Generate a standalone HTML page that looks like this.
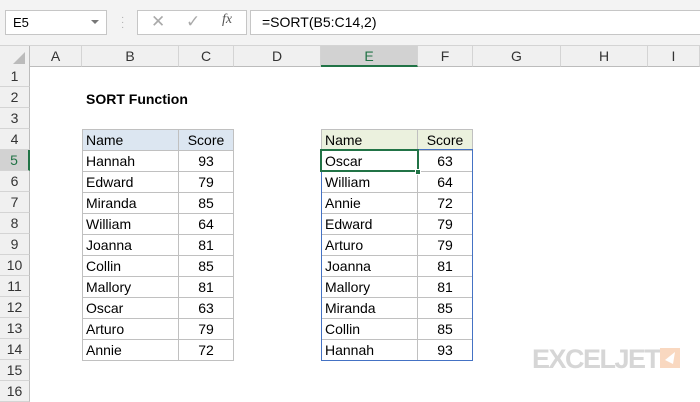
<!DOCTYPE html>
<html><head><style>
*{margin:0;padding:0;box-sizing:border-box}
body{width:700px;height:400px;overflow:hidden;background:#fff;font-family:"Liberation Sans",Arial,sans-serif;position:relative;font-size:13px;color:#000}
.a{position:absolute}
.top{left:0;top:0;width:700px;height:46px;background:#f3f3f3;border-bottom:1px solid #d4d4d4}
.box{background:#fff;border:1px solid #c6c6c6}
.ch{top:46px;height:21px;background:#f0f0f0;border-right:1px solid #d4d4d4;border-bottom:1px solid #bcbcbc;text-align:center;line-height:20px;font-size:14px;color:#333}
.rh{left:0;width:30px;height:21px;background:#f0f0f0;border-bottom:1px solid #d4d4d4;border-right:1px solid #bcbcbc;text-align:center;line-height:21px;font-size:14px;color:#333}
.t{border-top:1px solid #c0c0c0;border-left:1px solid #c0c0c0}
.c{height:21px;border-right:1px solid #c0c0c0;border-bottom:1px solid #c0c0c0;line-height:20px;font-size:14px;padding-left:3px;white-space:nowrap}
.n{text-align:center;padding-left:0}
.g{background:#dce6f1}.e{background:#ebf1de}
</style></head><body>
<div class="a top"></div>
<div class="a box" style="left:5px;top:10px;width:102px;height:25px;font-size:13px;line-height:23px;padding-left:7px">E5</div>
<div class="a" style="left:91px;top:20px;width:0;height:0;border-left:4px solid transparent;border-right:4px solid transparent;border-top:4px solid #777"></div>
<div class="a" style="left:121px;top:15px;color:#aaa;font-size:10px;line-height:5px">·<br>·<br>·</div>
<div class="a box" style="left:137px;top:10px;width:110px;height:25px"></div>
<div class="a" style="left:151px;top:12px;color:#aaa;font-size:17px">✕</div>
<div class="a" style="left:186px;top:12px;color:#aaa;font-size:17px">✓</div>
<div class="a" style="left:222px;top:12px;color:#555;font-size:14px;font-style:italic;font-family:'Liberation Serif',serif">fx</div>
<div class="a box" style="left:250px;top:10px;width:460px;height:25px;line-height:23px;padding-left:11px;font-size:14px">=SORT(B5:C14,2)</div>

<div class="a" style="left:0;top:46px;width:30px;height:21px;background:#f0f0f0;border-right:1px solid #bcbcbc;border-bottom:1px solid #bcbcbc"></div>
<div class="a" style="left:13px;top:52px;width:0;height:0;border-left:12px solid transparent;border-bottom:12px solid #bbb"></div>
<div class="a ch" style="left:30px;width:52px">A</div>
<div class="a ch" style="left:82px;width:97px">B</div>
<div class="a ch" style="left:179px;width:55px">C</div>
<div class="a ch" style="left:234px;width:87px">D</div>
<div class="a ch" style="left:321px;width:97px;background:#d2d2d2;border-bottom:2px solid #217346;color:#217346">E</div>
<div class="a ch" style="left:418px;width:55px">F</div>
<div class="a ch" style="left:473px;width:88px">G</div>
<div class="a ch" style="left:561px;width:87px">H</div>
<div class="a ch" style="left:648px;width:52px">I</div>

<div class="a rh" style="top:66px">1</div>
<div class="a rh" style="top:87px">2</div>
<div class="a rh" style="top:108px">3</div>
<div class="a rh" style="top:129px">4</div>
<div class="a rh" style="top:150px;background:#d2d2d2;border-right:2px solid #217346;color:#217346">5</div>
<div class="a rh" style="top:171px">6</div>
<div class="a rh" style="top:192px">7</div>
<div class="a rh" style="top:213px">8</div>
<div class="a rh" style="top:234px">9</div>
<div class="a rh" style="top:255px">10</div>
<div class="a rh" style="top:276px">11</div>
<div class="a rh" style="top:297px">12</div>
<div class="a rh" style="top:318px">13</div>
<div class="a rh" style="top:339px">14</div>
<div class="a rh" style="top:360px">15</div>
<div class="a rh" style="top:381px">16</div>

<div class="a" style="left:86px;top:89px;font-weight:bold;font-size:14px;line-height:20px">SORT Function</div>

<div class="a t" style="left:82px;top:129px">
<div style="display:grid;grid-template-columns:96px 55px">
<div class="c g">Name</div><div class="c g n">Score</div>
<div class="c">Hannah</div><div class="c n">93</div>
<div class="c">Edward</div><div class="c n">79</div>
<div class="c">Miranda</div><div class="c n">85</div>
<div class="c">William</div><div class="c n">64</div>
<div class="c">Joanna</div><div class="c n">81</div>
<div class="c">Collin</div><div class="c n">85</div>
<div class="c">Mallory</div><div class="c n">81</div>
<div class="c">Oscar</div><div class="c n">63</div>
<div class="c">Arturo</div><div class="c n">79</div>
<div class="c">Annie</div><div class="c n">72</div>
</div></div>

<div class="a t" style="left:321px;top:129px">
<div style="display:grid;grid-template-columns:96px 55px">
<div class="c e">Name</div><div class="c e n">Score</div>
<div class="c">Oscar</div><div class="c n">63</div>
<div class="c">William</div><div class="c n">64</div>
<div class="c">Annie</div><div class="c n">72</div>
<div class="c">Edward</div><div class="c n">79</div>
<div class="c">Arturo</div><div class="c n">79</div>
<div class="c">Joanna</div><div class="c n">81</div>
<div class="c">Mallory</div><div class="c n">81</div>
<div class="c">Miranda</div><div class="c n">85</div>
<div class="c">Collin</div><div class="c n">85</div>
<div class="c">Hannah</div><div class="c n">93</div>
</div></div>
<div class="a" style="left:321px;top:149px;width:152px;height:212px;border:1px solid #4472c4"></div>
<div class="a" style="left:320px;top:149px;width:99px;height:23px;border:2px solid #217346"></div>
<div class="a" style="left:415px;top:169px;width:6px;height:6px;background:#217346;border:1px solid #fff"></div>

<div class="a" style="left:532px;top:344px;font-size:27px;font-weight:bold;color:#d6d6d6;letter-spacing:-1.5px;line-height:30px">EXCELJET</div>
<div class="a" style="left:660px;top:348px;width:20px;height:20px;background:#f9d8c0"></div>
<svg class="a" style="left:660px;top:348px" width="20" height="20"><path d="M15 4 L5 12 L13 16 Z" fill="#fff"/></svg>
</body></html>
